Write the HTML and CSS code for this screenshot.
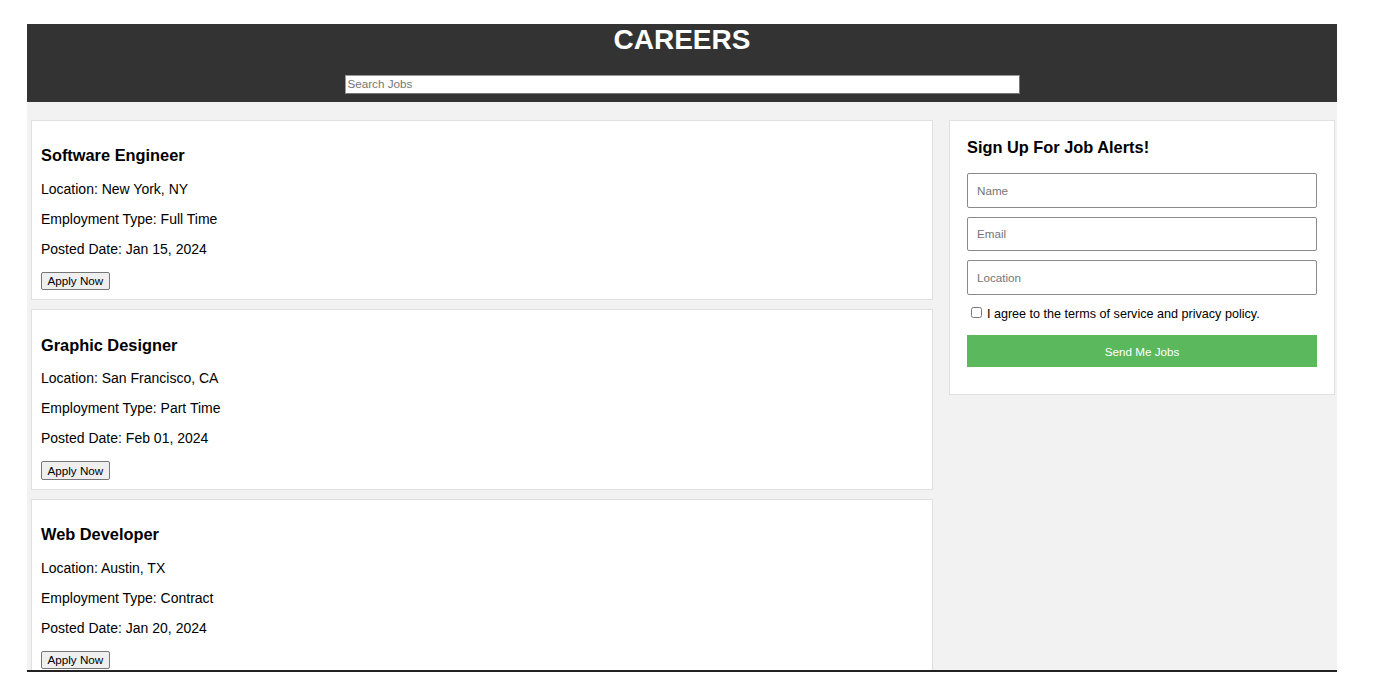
FILE: index.html
```html
<!DOCTYPE html>
<html lang="en">
<head>
    <meta charset="UTF-8">
    <meta name="viewport" content="width=device-width, initial-scale=1.0">
    <title>Careers</title>
    <link rel="stylesheet" href="styles.css">
</head>
<body>

<div class="page">
    <header class="top">
        <h1>CAREERS</h1>
        <input type="text" class="search" placeholder="Search Jobs">
    </header>

    <div class="main">
        <div class="jobs">
            <div class="job">
                <h3>Software Engineer</h3>
                <p>Location: New York, NY</p>
                <p>Employment Type: Full Time</p>
                <p>Posted Date: Jan 15, 2024</p>
                <button class="apply">Apply Now</button>
            </div>
            <div class="job">
                <h3>Graphic Designer</h3>
                <p>Location: San Francisco, CA</p>
                <p>Employment Type: Part Time</p>
                <p>Posted Date: Feb 01, 2024</p>
                <button class="apply">Apply Now</button>
            </div>
            <div class="job">
                <h3>Web Developer</h3>
                <p>Location: Austin, TX</p>
                <p>Employment Type: Contract</p>
                <p>Posted Date: Jan 20, 2024</p>
                <button class="apply">Apply Now</button>
            </div>
        </div>

        <div class="alerts">
            <h3>Sign Up For Job Alerts!</h3>
            <input type="text" class="field" placeholder="Name">
            <input type="email" class="field" placeholder="Email">
            <input type="text" class="field" placeholder="Location">
            <label class="agree"><input type="checkbox">I agree to the terms of service and privacy policy.</label>
            <button class="send">Send Me Jobs</button>
        </div>
    </div>
</div>

</body>
</html>
```

FILE: styles.css
```css
body { margin: 0; background: #fff; font-family: "Liberation Sans", Arial, sans-serif; font-size: 14px; color: #000; }
.page { width: 1310px; margin: 24px 0 0 27px; }

.top { background: #333; color: #fff; text-align: center; padding: 0 0 8px; }
.top h1 { margin: 0 0 18.76px; font-size: 28px; }
.search { display: block; box-sizing: border-box; width: 675px; height: 19px; margin: 0 auto; padding: 0 2px 2px; font-family: inherit; font-size: 11.67px; border: 1px solid #999; border-right-color: #767676; border-bottom-color: #767676; background: #fff; }
.search::placeholder, .field::placeholder { color: #757575; }

.main { display: flex; align-items: flex-start; gap: 16px; box-sizing: border-box; height: 570px; padding: 18px 2px 0 4px; overflow: hidden; background: #f2f2f2; border-bottom: 2px solid #222; }
.jobs { flex: 1; min-width: 0; display: flex; flex-direction: column; gap: 9px; }
.job { flex-shrink: 0; background: #fff; border: 1px solid #e0e0e0; padding: 9px; }
.job h3 { margin: 16.38px 0 15.4px; font-size: 16.38px; }
.job p { margin: 14px 0; }
.job p:last-of-type { margin-bottom: 15px; }
.apply { display: block; padding: 1.7px 5.5px; font-family: inherit; font-size: 11.67px; line-height: 13.4px; color: #000; background: #efefef; border: 1px solid #767676; border-radius: 2px; }

.alerts { flex-shrink: 0; width: 386px; box-sizing: border-box; background: #fff; border: 1px solid #e0e0e0; padding: 17px; }
.alerts h3 { margin: 0 0 16.38px; font-size: 16.38px; }
.field { display: block; box-sizing: border-box; width: 100%; height: 34.4px; margin: 0 0 9.2px; padding: 0 9px; font-family: inherit; font-size: 11.67px; border: 1px solid #8a8a8a; border-radius: 2px; }
.agree { display: flex; align-items: center; height: 15.4px; margin: 11.4px 0 13.8px; font-size: 12.6px; }
.agree input { width: 11.4px; height: 11.4px; margin: 0 5px 2.6px 3.5px; }
.send { display: block; width: 100%; height: 31.7px; margin-bottom: 9.6px; font-family: inherit; font-size: 11.67px; color: #fff; background: #5cb85c; border: none; }
```
